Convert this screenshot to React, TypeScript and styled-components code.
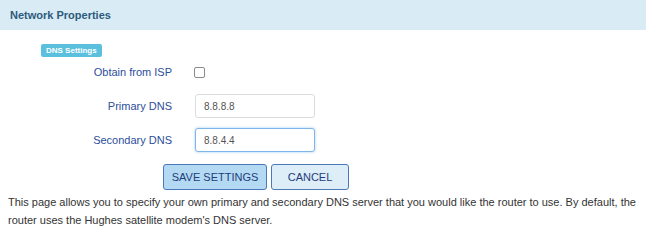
import * as React from 'react';
import styled, { createGlobalStyle } from 'styled-components';

const GlobalStyle = createGlobalStyle`
    body {
        margin: 0;
        background: #fff;
        font-family: "Liberation Sans", Arial, sans-serif;
    }
`;

const Page = styled.div`
    width: 646px;
    height: 250px;
    overflow: hidden;
`;

const Header = styled.div`
    height: 30px;
    display: flex;
    align-items: center;
    padding-left: 10px;
    background: #d9ebf5;
    color: #2d5b7c;
    font-size: 11px;
    font-weight: bold;
`;

const Section = styled.div`
    padding-top: 14px;
`;

const Badge = styled.div`
    width: fit-content;
    margin-left: 41px;
    height: 13px;
    line-height: 13px;
    padding: 0 5px;
    border-radius: 2px;
    background: #5bc0de;
    color: #fff;
    font-size: 8px;
    font-weight: bold;
`;

const FormGrid = styled.div`
    display: grid;
    grid-template-columns: 172px 120px;
    grid-auto-rows: 24px;
    column-gap: 23px;
    row-gap: 10px;
    margin-top: 3px;
    align-items: center;
`;

const Label = styled.label`
    text-align: right;
    color: #2c4e9c;
    font-size: 11px;
`;

const CheckCell = styled.div`
    display: flex;
    align-items: center;
`;

const Checkbox = styled.input`
    width: 11px;
    height: 11px;
    margin: 0 0 0 -1px;
    appearance: none;
    border: 1px solid #8a8a8a;
    border-radius: 2px;
    background: #fff;
`;

const TextInput = styled.input<{ $focused?: boolean }>`
    box-sizing: border-box;
    width: 120px;
    height: 24px;
    padding: 0 8px;
    border: 1px solid ${p => (p.$focused ? '#7fb8e8' : '#dcdcdc')};
    border-radius: 3px;
    box-shadow: ${p => (p.$focused ? '0 0 3px rgba(102, 175, 233, 0.6)' : 'none')};
    font-family: "Liberation Sans", Arial, sans-serif;
    font-size: 10px;
    color: #555;
    outline: none;
`;

const Buttons = styled.div`
    display: flex;
    gap: 4px;
    margin: 12px 0 0 163px;
`;

const Button = styled.button<{ $primary?: boolean }>`
    box-sizing: border-box;
    height: 26px;
    padding: 0;
    white-space: nowrap;
    border: 1px solid #4a78b8;
    border-radius: 3px;
    background: ${p => (p.$primary ? '#b4daf3' : '#ddeef9')};
    color: #1f3d7a;
    font-family: "Liberation Sans", Arial, sans-serif;
    font-size: 11px;
    width: ${p => (p.$primary ? '104px' : '78px')};
`;

const Help = styled.p`
    margin: 3px 0 0 8px;
    width: 630px;
    color: #333;
    font-size: 11px;
    line-height: 18px;
`;

export default function App() {
    return (
        <Page>
            <GlobalStyle />
            <Header>Network Properties</Header>
            <Section>
                <Badge>DNS Settings</Badge>
                <FormGrid>
                    <Label>Obtain from ISP</Label>
                    <CheckCell><Checkbox type="checkbox" /></CheckCell>
                    <Label>Primary DNS</Label>
                    <TextInput defaultValue="8.8.8.8" />
                    <Label>Secondary DNS</Label>
                    <TextInput $focused defaultValue="8.8.4.4" />
                </FormGrid>
                <Buttons>
                    <Button $primary>SAVE SETTINGS</Button>
                    <Button>CANCEL</Button>
                </Buttons>
                <Help>
                    This page allows you to specify your own primary and secondary DNS server that you would
                    like the router to use. By default, the router uses the Hughes satellite modem's DNS server.
                </Help>
            </Section>
        </Page>
    );
}
